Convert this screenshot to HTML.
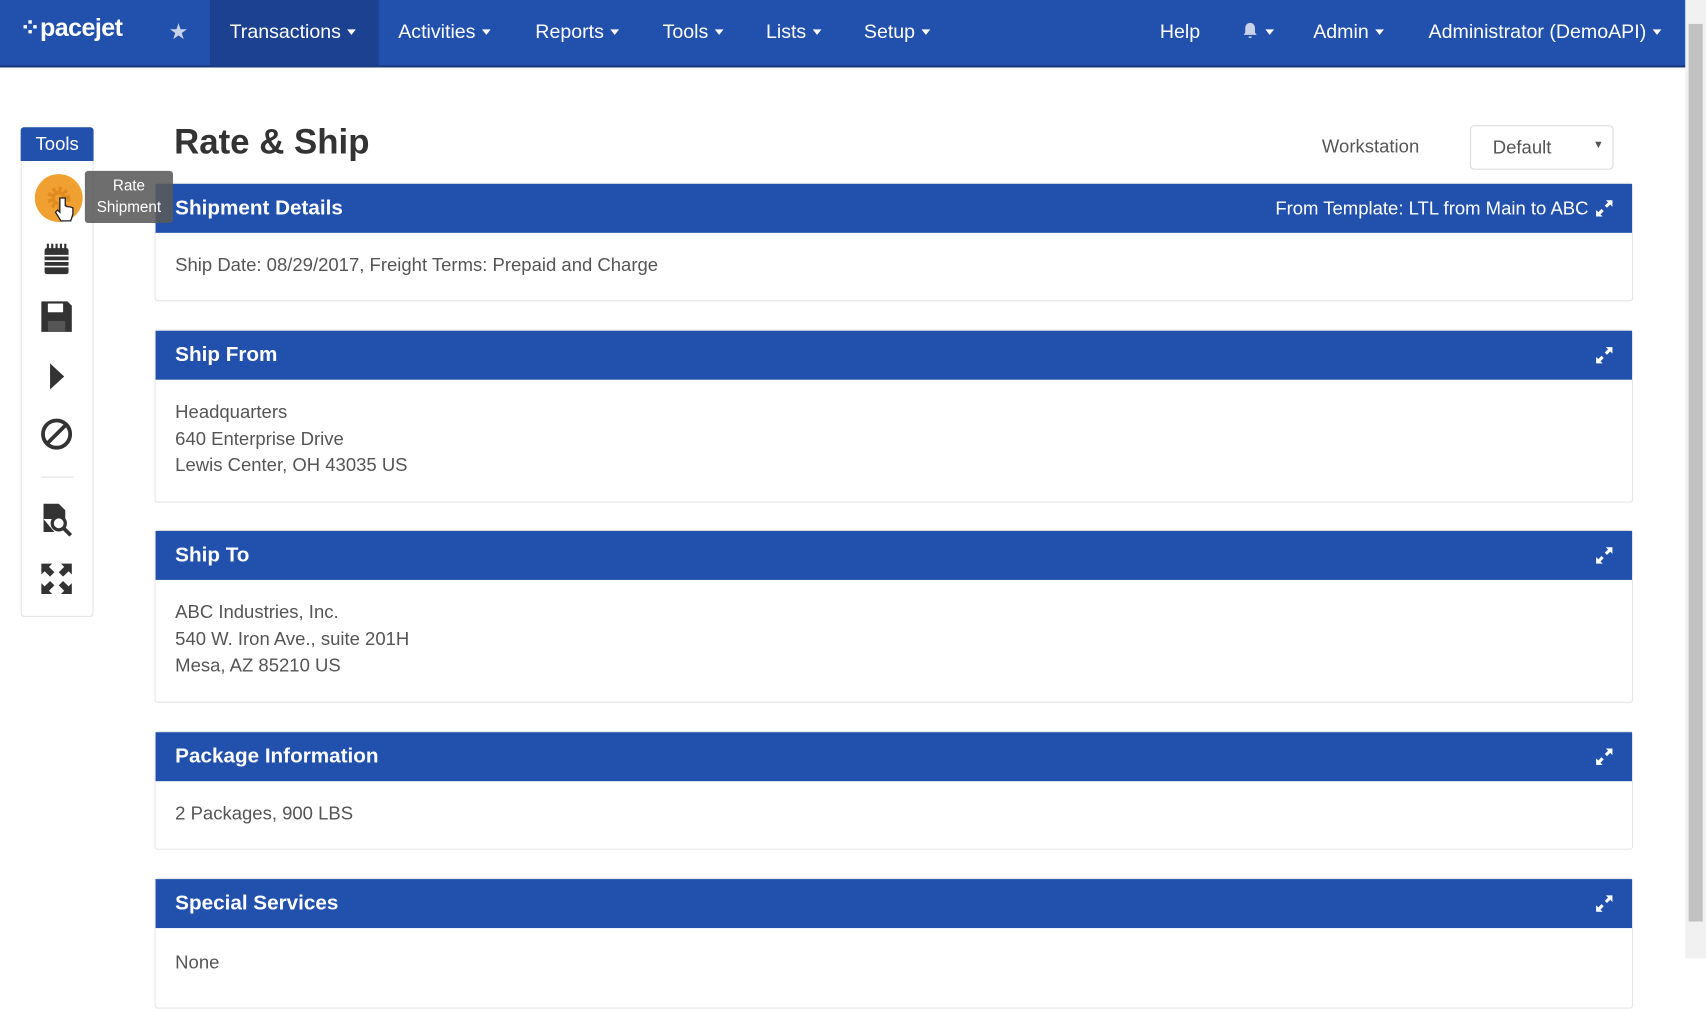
<!DOCTYPE html>
<html><head><meta charset="utf-8"><style>
*{box-sizing:border-box;margin:0;padding:0}
html,body{width:1706px;height:958px;overflow:hidden;background:#fff;font-family:"Liberation Sans",sans-serif}
#w{position:absolute;left:0;top:0;width:1568px;height:881px;transform:scale(1.08801);transform-origin:0 0}
.nav{position:absolute;left:0;top:0;width:1549px;height:62px;background:#2150ad;border-bottom:2px solid #173a80}
.nav span{position:absolute;top:19px;color:#fff;font-size:18px}
.car{display:inline-block;width:0;height:0;border-left:4px solid transparent;border-right:4px solid transparent;border-top:5px solid #fff;margin-left:6px;vertical-align:3px}
.act{position:absolute;left:193px;top:0;width:155px;height:60px;background:#1b4190}
.sb{position:absolute;left:1549px;top:0;width:19px;height:881px;background:#f1f1f1}
.sb div{position:absolute;left:3px;top:22px;width:13px;height:825px;background:#c1c1c1}
.tools{position:absolute;left:19px;top:117px;width:67px;height:450px;border:1px solid #e3e3e3;border-radius:3px}
.th{position:absolute;left:19px;top:117px;width:67px;height:31px;background:#2150ad;color:#fff;font-size:17px;text-align:center;line-height:31px;border-radius:3px 3px 0 0}
.ic{position:absolute;left:36px}
.panel{position:absolute;left:142px;width:1359px;border:1px solid #e5e5e5;border-radius:3px}
.ph{height:45px;background:#2150ad;color:#fff;font-weight:bold;font-size:19px;line-height:45px;padding-left:18px;position:relative}
.ph .ex{position:absolute;right:17px;top:14px;width:17px;height:17px}
.pb{padding:18px;font-size:17px;color:#555;line-height:24.5px}
</style></head><body><div id="w">
<div class="nav">
<div class="act"></div>
<span style="left:18px;top:12px;font-size:23px;font-weight:bold;letter-spacing:-0.5px">⁘pacejet</span>
<span style="left:155px;top:17px;font-size:20px;color:#c8d3ea">★</span>
<span style="left:211px">Transactions<i class="car"></i></span>
<span style="left:366px">Activities<i class="car"></i></span>
<span style="left:492px">Reports<i class="car"></i></span>
<span style="left:609px">Tools<i class="car"></i></span>
<span style="left:704px">Lists<i class="car"></i></span>
<span style="left:794px">Setup<i class="car"></i></span>
<span style="left:1066px">Help</span>
<span style="left:1141px"><svg width="16" height="16" viewBox="0 0 16 16" style="vertical-align:-1px"><path d="M8 1c-3 0-4.5 2.5-4.5 5v4L2 12h12l-1.5-2V6C12.5 3.5 11 1 8 1z M6.5 13.5a1.5 1.5 0 0 0 3 0z" fill="#c8d3ea"/></svg><i class="car"></i></span>
<span style="left:1207px">Admin<i class="car"></i></span>
<span style="left:1313px">Administrator (DemoAPI)<i class="car"></i></span>
</div>
<div class="sb"><div></div></div>
<div class="tools"></div>
<div class="th">Tools</div>
<div style="position:absolute;left:32px;top:160px;width:44px;height:44px;border-radius:50%;background:#f0a030"></div>
<svg style="position:absolute;left:40px;top:168px" width="28" height="28" viewBox="0 0 28 28"><circle cx="14" cy="14" r="8" fill="none" stroke="#e08a20" stroke-width="5" stroke-dasharray="3 2.3"/><circle cx="14" cy="14" r="5" fill="none" stroke="#e08a20" stroke-width="3"/></svg>
<svg style="position:absolute;left:50px;top:180px" width="20" height="26" viewBox="0 0 20 26"><path d="M5 2v13l-2-2-2 2 5 8h9l2-6v-6l-3-1-2 0-2-1V2z" fill="#fff" stroke="#222" stroke-width="1.2"/></svg>
<svg class="ic" style="top:222px" width="32" height="32" viewBox="0 0 32 32"><rect x="5" y="6" width="22" height="24" rx="2" fill="#333"/><g stroke="#fff" stroke-width="1.5"><line x1="5" y1="13" x2="27" y2="13"/><line x1="5" y1="18" x2="27" y2="18"/><line x1="5" y1="23" x2="27" y2="23"/></g><g fill="#333"><rect x="7" y="2" width="2" height="5"/><rect x="11" y="2" width="2" height="5"/><rect x="15" y="2" width="2" height="5"/><rect x="19" y="2" width="2" height="5"/><rect x="23" y="2" width="2" height="5"/></g></svg>
<svg class="ic" style="top:275px" width="32" height="32" viewBox="0 0 32 32"><path d="M2 2h24l4 4v24H2z" fill="#333"/><rect x="8" y="4" width="14" height="8" fill="#fff"/><rect x="8" y="20" width="16" height="10" fill="#555"/></svg>
<svg class="ic" style="top:330px" width="32" height="32" viewBox="0 0 32 32"><path d="M10 4l13 12-13 12z" fill="#333"/></svg>
<svg class="ic" style="top:383px" width="32" height="32" viewBox="0 0 32 32"><circle cx="16" cy="16" r="12.5" fill="none" stroke="#333" stroke-width="3.5"/><line x1="8" y1="24" x2="24" y2="8" stroke="#333" stroke-width="3.5"/></svg>
<div style="position:absolute;left:38px;top:438px;width:30px;height:1px;background:#e5e5e5"></div>
<svg class="ic" style="top:461px" width="32" height="32" viewBox="0 0 32 32"><path d="M4 2h14l6 6v8H4z" fill="#333"/><circle cx="18" cy="20" r="6" fill="#fff" stroke="#333" stroke-width="3"/><line x1="22" y1="24" x2="29" y2="31" stroke="#333" stroke-width="3.5"/><path d="M4 16v12h10" fill="#333"/></svg>
<svg class="ic" style="top:516px" width="32" height="32" viewBox="0 0 32 32"><g fill="#333"><path d="M2 2h10l-3 3 5 5-4 4-5-5-3 3z"/><path d="M30 2v10l-3-3-5 5-4-4 5-5-3-3z"/><path d="M2 30V20l3 3 5-5 4 4-5 5 3 3z"/><path d="M30 30H20l3-3-5-5 4-4 5 5 3-3z"/></g></svg>
<div style="position:absolute;left:160px;top:112px;font-size:32px;font-weight:bold;color:#333">Rate &amp; Ship</div>
<div style="position:absolute;left:1215px;top:125px;font-size:17px;color:#555">Workstation</div>
<div style="position:absolute;left:1351px;top:115px;width:132px;height:41px;border:1px solid #ddd;border-radius:4px;font-size:17px;color:#555;padding:10px 0 0 20px">Default<span style="position:absolute;right:8px;top:12px;font-size:10px">▼</span></div>
<div class="panel" style="top:168px;height:109px"><div class="ph">Shipment Details<span style="position:absolute;right:40px;font-weight:normal;font-size:17px">From Template: LTL from Main to ABC</span><svg class="ex" viewBox="0 0 17 17"><path d="M10 1h6v6l-2-2-3 3-2-2 3-3z M7 16H1v-6l2 2 3-3 2 2-3 3z" fill="#fff"/></svg></div><div class="pb">Ship Date: 08/29/2017, Freight Terms: Prepaid and Charge</div></div>
<div style="position:absolute;left:78px;top:157px;width:81px;height:48px;background:rgba(90,90,90,.88);border-radius:3px;color:#fff;font-size:14px;text-align:center;line-height:20px;padding-top:3px">Rate<br>Shipment</div>
<div class="panel" style="top:303px;height:159px"><div class="ph">Ship From<svg class="ex" viewBox="0 0 17 17"><path d="M10 1h6v6l-2-2-3 3-2-2 3-3z M7 16H1v-6l2 2 3-3 2 2-3 3z" fill="#fff"/></svg></div><div class="pb">Headquarters<br>640 Enterprise Drive<br>Lewis Center, OH 43035 US</div></div>
<div class="panel" style="top:487px;height:159px"><div class="ph">Ship To<svg class="ex" viewBox="0 0 17 17"><path d="M10 1h6v6l-2-2-3 3-2-2 3-3z M7 16H1v-6l2 2 3-3 2 2-3 3z" fill="#fff"/></svg></div><div class="pb">ABC Industries, Inc.<br>540 W. Iron Ave., suite 201H<br>Mesa, AZ 85210 US</div></div>
<div class="panel" style="top:672px;height:109px"><div class="ph">Package Information<svg class="ex" viewBox="0 0 17 17"><path d="M10 1h6v6l-2-2-3 3-2-2 3-3z M7 16H1v-6l2 2 3-3 2 2-3 3z" fill="#fff"/></svg></div><div class="pb">2 Packages, 900 LBS</div></div>
<div class="panel" style="top:807px;height:120px"><div class="ph">Special Services<svg class="ex" viewBox="0 0 17 17"><path d="M10 1h6v6l-2-2-3 3-2-2 3-3z M7 16H1v-6l2 2 3-3 2 2-3 3z" fill="#fff"/></svg></div><div class="pb" style="padding-top:20px">None</div></div>
</div></body></html>
